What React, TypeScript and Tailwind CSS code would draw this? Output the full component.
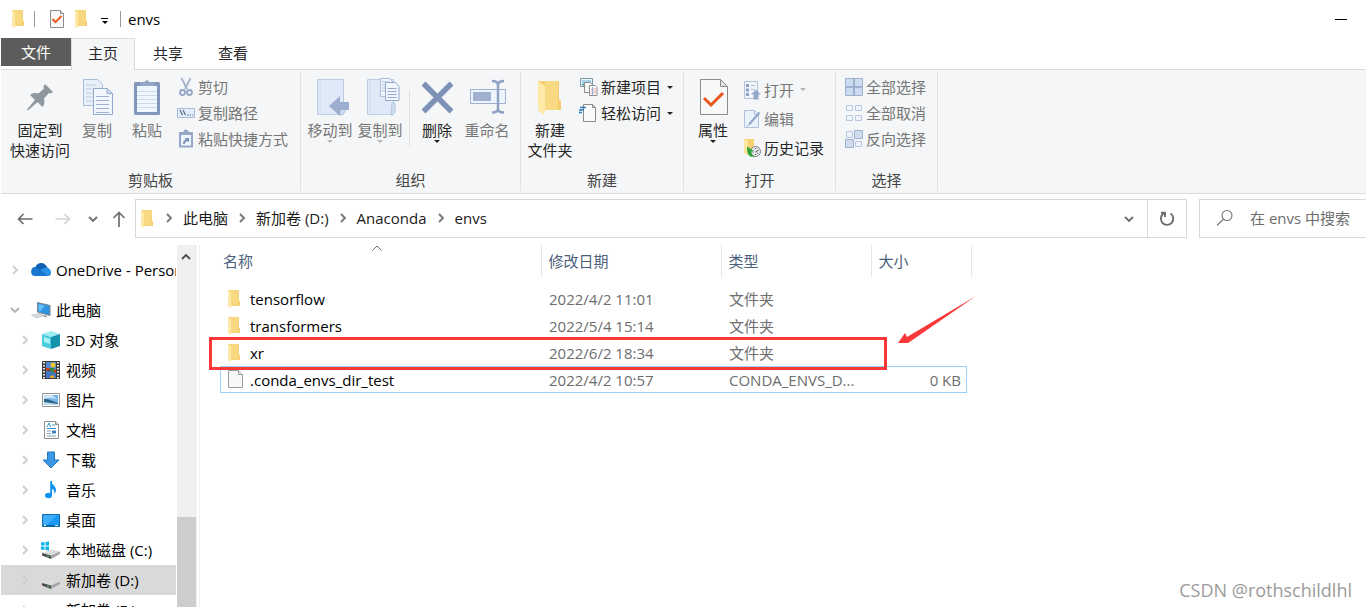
import type { ReactNode } from "react";
import clsx from "clsx";

type IconProps = { className?: string };

/* ---------- shared glyphs ---------- */

function FolderIcon({ className = "h-[18px] w-4" }: IconProps) {
  return (
    <svg viewBox="0 0 16 18" className={clsx("shrink-0", className)} aria-hidden="true">
      <path d="M2 0h11v10.500l1 1V16H4z" fill="#f3cd6c" />
      <path d="M5 0h7.500v15.500H5z" fill="#f8d981" />
      <path d="M2 0l3 2V17l-1 1-2-1.800z" fill="#ffe9a8" />
    </svg>
  );
}

function CheckPageIcon({ className = "h-[18px] w-4" }: IconProps) {
  return (
    <svg viewBox="0 0 16 18" className={clsx("shrink-0", className)} aria-hidden="true">
      <path d="M1.500.5h10l3 3v14h-13z" fill="#f8f8f9" stroke="#8c8c8c" />
      <path d="M11.500.5v3h3" fill="#dcdcdc" stroke="#8c8c8c" />
      <path d="M3.500 9l3 3.200L12.500 6" fill="none" stroke="#e8561b" strokeWidth="1.900" />
    </svg>
  );
}

function Caret({ className = "text-[#222]" }: IconProps) {
  return (
    <svg viewBox="0 0 6 3" className={clsx("h-[3px] w-1.5 shrink-0", className)} aria-hidden="true">
      <path d="M0 0h6L3 3z" fill="currentColor" />
    </svg>
  );
}

function Chevron({ dir, className }: IconProps & { dir: "right" | "down" | "up" }) {
  const d = { right: "M4 2l4 4-4 4", down: "M2 4l4 4 4-4", up: "M2 8l4-4 4 4" }[dir];
  return (
    <svg viewBox="0 0 12 12" className={clsx("size-3 shrink-0", className)} fill="none" stroke="currentColor" strokeWidth="1.900" aria-hidden="true">
      <path d={d} />
    </svg>
  );
}

/* ---------- ribbon icons, large (40x40) ---------- */

function Big({ children }: { children: ReactNode }) {
  return (
    <svg viewBox="0 0 40 40" className="size-10 shrink-0" fill="none" aria-hidden="true">
      {children}
    </svg>
  );
}

const PinIcon = () => (
  <Big>
    <path d="M25 6l8 8-2 1.500-2-.5-5 5.500c1 3 .5 6-1.500 8.500l-5-5-9.500 8.500 -1-1 8-9.500-5-5c2.500-2 5.500-2.500 8.500-1.500l5.500-5-.500-2z" fill="#8d989f" />
  </Big>
);

const CopyIcon = () => (
  <Big>
    <path d="M6.500 1.500h14l5 5v21h-19z" fill="#e8f0fa" stroke="#a9bddb" />
    <path d="M9 7h10M9 11h12M9 15h8M9 19h8M9 23h8" stroke="#bdcde6" />
    <path d="M16.500 10.500h13.500l5.500 5v21h-19z" fill="#f1f6fd" stroke="#94aacd" />
    <path d="M30 10.500v5h5.500z" fill="#d9e5f5" stroke="#94aacd" />
    <path d="M19 18.500h13M19 22.500h13M19 26.500h13M19 30.500h13M19 34.500h13" stroke="#9fb2d2" />
  </Big>
);

const PasteIcon = () => (
  <Big>
    <rect x="7" y="4" width="26" height="33" rx="1.500" fill="#8397bd" />
    <path d="M10 8h20v26H10z" fill="#f0f6fd" />
    <path d="M10 13.500h20M10 17.500h20M10 21.500h20M10 25.500h20M10 29.500h20" stroke="#cbdbed" />
    <path d="M13 8V4h4.500a2.700 2.700 0 0 1 5 0H27v4z" fill="#93a5c8" />
  </Big>
);

const MoveToIcon = () => (
  <Big>
    <path d="M7.500 1.500h26v35h-26z" fill="#dfe9f7" stroke="#bccce3" />
    <path d="M10 2v34" stroke="#cfdcef" />
    <path d="M31 25h4v9l-3 3h-2z" fill="#cfdeef" stroke="#b5c7df" />
    <path d="M39 24v8h-9v6l-11-10 11-10v6z" fill="#9dafcf" />
  </Big>
);

const CopyToIcon = () => (
  <Big>
    <path d="M7.500 1.500h26v35h-26z" fill="#dfe9f7" stroke="#bccce3" />
    <path d="M10 2v34" stroke="#cfdcef" />
    <path d="M32 25h3v9l-2 3h-2z" fill="#cfdeef" stroke="#b5c7df" />
    <path d="M20.500.500h9l4 4v14h-13z" fill="#f1f6fd" stroke="#a9bddb" />
    <path d="M22 4h7M22 7h4M22 10h4M22 13h4" stroke="#a9bddb" />
    <path d="M25.500 4.500h10l3.500 4v14H25.500z" fill="#f1f6fd" stroke="#94aacd" />
    <path d="M27.500 10.500h9M27.500 13.500h9M27.500 16.500h9M27.500 19.500h9" stroke="#94aacd" />
  </Big>
);

const DeleteIcon = () => (
  <Big>
    <path d="M6.500 5.500l28 28M34.500 5.500l-28 28" stroke="#7d90b6" strokeWidth="5.500" />
  </Big>
);

const RenameIcon = () => (
  <Big>
    <path d="M3.500 11.500h35v14h-35z" fill="#edf4fc" stroke="#9db1d1" />
    <path d="M6 14h18v9H6z" fill="#a0b1d0" />
    <path d="M25 3c4 0 6 1 6 4 0-3 2-4 6-4M31 6v26M25 34.500c4 0 6-1 6-4 0 3 2 4 6 4" stroke="#8fa2c4" strokeWidth="2.500" />
  </Big>
);

const NewFolderIcon = () => (
  <Big>
    <path d="M9 3h20v18l2 2v9H14z" fill="#f4ce6e" />
    <path d="M15 3h13v29H15z" fill="#f9da82" />
    <path d="M8 3l7 5v26l-2 3-5-5z" fill="#ffe9a8" />
  </Big>
);

const PropertiesIcon = () => (
  <Big>
    <path d="M7.500 1.500h20l7 7v28h-27z" fill="#f8f8f9" stroke="#8c8c8c" />
    <path d="M27.500 1.500v7h7z" fill="#e2e2e2" stroke="#8c8c8c" />
    <path d="M11 20l7 7L30 15" stroke="#e8561b" strokeWidth="3" />
  </Big>
);

/* ---------- ribbon icons, small (20x20) ---------- */

function Small({ children }: { children: ReactNode }) {
  return (
    <svg viewBox="0 0 20 20" className="size-5 shrink-0" fill="none" aria-hidden="true">
      {children}
    </svg>
  );
}

const CutIcon = () => (
  <Small>
    <path d="M5.500 1l5.500 11M14.500 1L9 12" stroke="#a3b2cc" strokeWidth="1.700" />
    <circle cx="6.500" cy="15.500" r="2.500" stroke="#92a5c6" strokeWidth="1.800" />
    <circle cx="13.500" cy="15.500" r="2.500" stroke="#92a5c6" strokeWidth="1.800" />
  </Small>
);

const CopyPathIcon = () => (
  <Small>
    <path d="M1.500 5.500h17v9h-17z" fill="#e3edf9" stroke="#aabbd6" />
    <path d="M4 7l2.500 5M7 7l2.500 5M11 12h1.500M13.500 12H15M16 12h1" stroke="#5d6e8e" strokeWidth="1.200" />
  </Small>
);

const PasteShortcutIcon = () => (
  <Small>
    <path d="M3 3h4.500a2.500 2.500 0 0 1 5 0H17v15.500H3z" fill="#95a8ca" />
    <path d="M5 6h10v10.500H5z" fill="#f0f6fd" />
    <path d="M7 15c0-3 1-4 3-4.500L8.500 9H13v4.500L11.500 12C10 12.500 9 13 9 15z" fill="#7c91ba" />
  </Small>
);

const NewItemIcon = () => (
  <Small>
    <path d="M1.500 1.500h12v8h-12z" fill="#eaf3f7" stroke="#7b98a5" />
    <path d="M3 6.500h9v2H3z" fill="#5b9ba8" />
    <path d="M3 3h9v3H3z" fill="#a8d2ee" />
    <path d="M5.500 5.500h6l2 2v8h-8z" fill="#f7f7f7" stroke="#8d8d8d" />
    <path d="M10.500 8.500h5.500l2 2v8h-7.500z" fill="#fff" stroke="#8d8d8d" />
    <path d="M12 12h5M12 14h5M12 16h5" stroke="#e9a5a5" />
    <path d="M13.500 10v8" stroke="#93b4df" />
  </Small>
);

const EasyAccessIcon = () => (
  <Small>
    <path d="M4.500 1.500h9l3 3v14h-12z" fill="#fafafa" stroke="#8a8a8a" />
    <path d="M13.500 1.500v3h3" stroke="#8a8a8a" />
    <path d="M1 4.500h6M0 7h5M0 9.500h3" stroke="#2d7ac0" strokeWidth="1.300" />
  </Small>
);

const OpenIcon = () => (
  <Small>
    <path d="M2.500 1.500h13v17h-13z" fill="#f0f5fc" stroke="#b5c3da" />
    <path d="M4 4h3v3H4zM4 8.500h3v3H4zM4 13h3v3H4z" fill="#8ea1c4" />
    <path d="M9 5.500h4M9 9.500h4" stroke="#b5c3da" />
    <path d="M14 9.500l5 5h-2.500v5h-5v-5H9z" fill="#96a8ca" />
  </Small>
);

const EditIcon = () => (
  <Small>
    <path d="M2.500 1.500h10l4 4v13h-14z" fill="#eaf2fb" stroke="#b0c1dc" />
    <path d="M12.500 1.500v4h4" stroke="#b0c1dc" />
    <path d="M7 15.500L17.500 3.500" stroke="#93a7ca" strokeWidth="2.200" />
    <path d="M4.500 17l2-.5" stroke="#93a7ca" />
  </Small>
);

const HistoryIcon = () => (
  <Small>
    <path d="M2 1h10v13H4z" fill="#f6d171" />
    <path d="M2 1l4 2v14l-4-2z" fill="#ffe7a0" />
    <circle cx="13.500" cy="13.500" r="5" fill="#e3e6e6" stroke="#7f8987" />
    <path d="M13.500 14l3-2M10.500 14h1M13.500 17v-1M13.500 10v1M16 15.500l-1-.5" stroke="#555" />
    <path d="M5 8.500c0 4 0 7 2.500 9.500 2 1 4 1 5.500.5-2.500-1-4-2.500-3.500-5L12 13z" fill="#2fa53c" />
  </Small>
);

const SelectAllIcon = () => (
  <Small>
    <path d="M1.500 1.500h17v17h-17z" fill="#cddbf0" stroke="#9fb1d0" />
    <path d="M10 1v18M1 10h18" stroke="#9fb1d0" strokeWidth="2" />
  </Small>
);

const SelectNoneIcon = () => (
  <Small>
    <path d="M2.500 2.500h6v5h-6zM11.500 2.500h6v5h-6zM2.500 12.500h6v5h-6zM11.500 12.500h6v5h-6z" fill="#edf4fc" stroke="#b9c8df" />
  </Small>
);

const InvertIcon = () => (
  <Small>
    <path d="M2.500 2.500h6v6h-6zM11.500 12.500h6v5h-6z" fill="#edf4fc" stroke="#b9c8df" />
    <path d="M10.500 1.500h8v8h-8zM1.500 10.500h8v8h-8z" fill="#cfdcf0" stroke="#9fb1d0" />
  </Small>
);

/* ---------- ribbon pieces ---------- */

type ButtonProps = {
  icon: ReactNode;
  label: string[];
  enabled?: boolean;
  caret?: boolean;
  className?: string;
};

function LargeButton({ icon, label, enabled, caret, className = "w-[50px]" }: ButtonProps) {
  return (
    <button
      type="button"
      className={clsx("flex shrink-0 flex-col items-center pt-1", enabled ? "text-[#262626]" : "text-[#767676]", className)}
    >
      {icon}
      <span className="mt-0.5 flex flex-col items-center whitespace-nowrap leading-5">
        {label.map((line) => (
          <span key={line}>{line}</span>
        ))}
      </span>
      {caret && <Caret className={enabled ? "text-[#222]" : "text-[#b5b5b5]"} />}
    </button>
  );
}

function SmallButton({ icon, label, enabled, caret, className = "h-[26px]" }: ButtonProps) {
  return (
    <button
      type="button"
      className={clsx("flex items-center gap-0.5 whitespace-nowrap", enabled ? "text-[#262626]" : "text-[#767676]", className)}
    >
      {icon}
      {label[0]}
      {caret && <Caret className={clsx("ml-1", enabled ? "text-[#222]" : "text-[#b5b5b5]")} />}
    </button>
  );
}

function Group({ title, className, children }: { title: string; className?: string; children: ReactNode }) {
  return (
    <section className="flex py-0.5">
      <div className="flex flex-col border-r border-[#e0e1e3] pt-0.5">
        <div className={clsx("flex h-24 items-start", className)}>{children}</div>
        <h2 className="text-center leading-5 text-[#444]">{title}</h2>
      </div>
    </section>
  );
}

function Ribbon() {
  return (
    <div className="flex h-[124px] border-b border-[#dadbdc] bg-[#f5f6f7]">
      <Group title="剪贴板" className="pl-2 pr-3">
        <LargeButton icon={<PinIcon />} label={["固定到", "快速访问"]} enabled className="w-[62px]" />
        <div className="ml-px flex">
          <LargeButton icon={<CopyIcon />} label={["复制"]} />
          <LargeButton icon={<PasteIcon />} label={["粘贴"]} />
        </div>
        <div className="ml-1 flex flex-col">
          <SmallButton icon={<CutIcon />} label={["剪切"]} />
          <SmallButton icon={<CopyPathIcon />} label={["复制路径"]} />
          <SmallButton icon={<PasteShortcutIcon />} label={["粘贴快捷方式"]} />
        </div>
      </Group>
      <Group title="组织" className="pl-1 pr-2">
        <LargeButton icon={<MoveToIcon />} label={["移动到"]} caret />
        <LargeButton icon={<CopyToIcon />} label={["复制到"]} caret />
        <div className="ml-1 mr-0.5 mt-4 h-14 w-px bg-[#e0e1e3]" />
        <LargeButton icon={<DeleteIcon />} label={["删除"]} enabled caret />
        <LargeButton icon={<RenameIcon />} label={["重命名"]} />
      </Group>
      <Group title="新建" className="pl-1 pr-2.5">
        <LargeButton icon={<NewFolderIcon />} label={["新建", "文件夹"]} enabled />
        <div className="ml-1 flex flex-col">
          <SmallButton icon={<NewItemIcon />} label={["新建项目"]} enabled caret />
          <SmallButton icon={<EasyAccessIcon />} label={["轻松访问"]} enabled caret />
        </div>
      </Group>
      <Group title="打开" className="pl-1 pr-[11px]">
        <LargeButton icon={<PropertiesIcon />} label={["属性"]} enabled caret />
        <div className="ml-1 flex flex-col pt-px">
          <SmallButton icon={<OpenIcon />} label={["打开"]} caret className="h-[29px]" />
          <SmallButton icon={<EditIcon />} label={["编辑"]} className="h-[29px]" />
          <SmallButton icon={<HistoryIcon />} label={["历史记录"]} enabled className="h-[29px]" />
        </div>
      </Group>
      <Group title="选择" className="pl-2 pr-[11px]">
        <div className="flex flex-col">
          <SmallButton icon={<SelectAllIcon />} label={["全部选择"]} />
          <SmallButton icon={<SelectNoneIcon />} label={["全部取消"]} />
          <SmallButton icon={<InvertIcon />} label={["反向选择"]} />
        </div>
      </Group>
    </div>
  );
}

/* ---------- title bar, tabs, address ---------- */

function TitleBar() {
  return (
    <header className="flex h-[38px] items-center pl-2 pr-[18px]">
      <FolderIcon className="ml-px h-[18px] w-4" />
      <span className="ml-2 h-4 w-px bg-[#9a9a9a]" />
      <button type="button" aria-label="属性" className="ml-3.5">
        <CheckPageIcon />
      </button>
      <button type="button" aria-label="新建文件夹" className="ml-2">
        <FolderIcon />
      </button>
      <button type="button" aria-label="自定义快速访问工具栏" className="ml-3 flex flex-col items-center gap-0.5 pt-1">
        <span className="h-px w-[7px] bg-black" />
        <Caret className="text-black" />
      </button>
      <span className="ml-3 h-4 w-px bg-[#9a9a9a]" />
      <h1 className="ml-[7px] flex-1 text-black">envs</h1>
      <button type="button" aria-label="最小化" className="mr-px flex h-3 w-3 items-center">
        <span className="h-px w-full bg-black" />
      </button>
    </header>
  );
}

function Tabs() {
  return (
    <nav className="flex h-8 text-[#262626]">
      <div className="w-[70px] border-b border-[#dadbdc]">
        <button type="button" className="h-7 w-full bg-[#5c5c5c] text-white">
          文件
        </button>
      </div>
      <button type="button" className="w-16 border-x border-t border-[#dadbdc] bg-[#f5f6f7] pb-[3px]">
        主页
      </button>
      <div className="flex flex-1 border-b border-[#dadbdc]">
        <button type="button" className="w-[66px] pb-px">
          共享
        </button>
        <button type="button" className="w-16 pb-px">
          查看
        </button>
      </div>
    </nav>
  );
}

const crumbs = ["此电脑", "新加卷 (D:)", "Anaconda", "envs"];

function AddressBar() {
  return (
    <div className="flex h-[51px] items-start pt-[5px]">
      <div className="flex h-10 w-[134px] shrink-0 items-center pl-4 text-[#6e6e6e]">
        <button type="button" aria-label="后退">
          <svg viewBox="0 0 16 16" className="size-4" fill="none" stroke="currentColor" strokeWidth="1.700" aria-hidden="true">
            <path d="M15.500 8H1.500M6.500 3l-5 5 5 5" />
          </svg>
        </button>
        <button type="button" aria-label="前进" className="ml-[22px] text-[#d4d4d4]">
          <svg viewBox="0 0 16 16" className="size-4" fill="none" stroke="currentColor" strokeWidth="1.700" aria-hidden="true">
            <path d="M.5 8h14M9.500 3l5 5-5 5" />
          </svg>
        </button>
        <button type="button" aria-label="最近位置" className="ml-4">
          <Chevron dir="down" />
        </button>
        <button type="button" aria-label="向上" className="ml-3">
          <svg viewBox="0 0 16 16" className="size-4" fill="none" stroke="currentColor" strokeWidth="1.700" aria-hidden="true">
            <path d="M8 16V1.500M2.500 7L8 1.500 13.500 7" />
          </svg>
        </button>
      </div>

      <div className="flex h-[39px] flex-1 items-center border border-[#d9d9d9]">
        <FolderIcon className="ml-[3px] h-[18px] w-4" />
        {crumbs.map((crumb) => (
          <span key={crumb} className="flex items-center pb-0.5">
            <Chevron dir="right" className="mx-2 text-[#777]" />
            <button type="button" className="whitespace-nowrap text-[#1a1a1a]">
              {crumb}
            </button>
          </span>
        ))}
        <button type="button" aria-label="展开" className="ml-auto mr-3 text-[#6e6e6e]">
          <Chevron dir="down" />
        </button>
        <button type="button" aria-label="刷新" className="flex h-full w-[39px] items-center justify-center border-l border-[#d9d9d9] text-[#6e6e6e]">
          <svg viewBox="0 0 16 16" className="size-4" fill="none" stroke="currentColor" strokeWidth="1.900" aria-hidden="true">
            <path d="M11.500 2.500A6.200 6.200 0 1 1 5 2.300M2 1.800h4V6" />
          </svg>
        </button>
      </div>

      <label className="ml-3 flex h-[39px] w-[167px] items-center border-y border-l border-[#d9d9d9] pb-0.5 pl-4">
        <svg viewBox="0 0 18 18" className="size-[18px] shrink-0 text-[#777]" fill="none" stroke="currentColor" strokeWidth="1.100" aria-hidden="true">
          <circle cx="11" cy="6.500" r="5" />
          <path d="M7.500 10L1 16.500" />
        </svg>
        <input
          type="search"
          aria-label="搜索"
          placeholder="在 envs 中搜索"
          className="ml-4 w-0 min-w-0 flex-1 bg-transparent outline-none placeholder:text-[#6d6d6d]"
        />
      </label>
    </div>
  );
}

/* ---------- navigation pane ---------- */

const icon = {
  cloud: (
    <>
      <path d="M4.500 15a4 4 0 0 1 0-8A6 6 0 0 1 15 5.500L17.500 9 9 15z" fill="#0f62b4" />
      <path d="M3 13.800L13 8a5 5 0 0 1 7 5c0 2-1 3-3 3H5c-1 0-2-1-2-2.200z" fill="#2a93e6" />
      <path d="M.3 13C0 9 3 7.200 6 8l10 6.500-1 1.500H4c-2 0-3.500-1-3.700-3z" fill="#1676d2" />
    </>
  ),
  pc: (
    <>
      <path d="M6.500 2.500l12.500 3v10L6.500 12z" fill="#2f94e0" stroke="#77838c" />
      <path d="M7.500 4L14 5.500l-5 6-1.500-.5z" fill="#64bdf3" />
      <path d="M13 15l3 1v1.500l-4-1z" fill="#8d979e" />
      <path d="M.5 15l8-1.500 4 2L5.500 18z" fill="#d8dde1" stroke="#aab2b8" strokeWidth=".6" />
    </>
  ),
  cube: (
    <>
      <path d="M1 4l9-3 9 3-9 3z" fill="#9cebf0" />
      <path d="M1 4l9 3v12l-9-3z" fill="#4ccbdc" />
      <path d="M19 4l-9 3v12l9-3z" fill="#1593ad" />
      <path d="M3 7l6 2v5l-6-2z" fill="#a8f0f2" />
    </>
  ),
  video: (
    <>
      <path d="M1 1h18v18H1z" fill="#3b3b3b" />
      <path d="M5 2h10v8H5z" fill="#5688cf" />
      <path d="M5 11h10v7H5z" fill="#3f76c8" />
      <circle cx="12" cy="5" r="2.500" fill="#ecc528" />
      <path d="M5 8h6l4 2v3l-4-1-3-2-3 1z" fill="#d2411e" />
      <path d="M8 8h5v4l-2 1z" fill="#2b8a43" />
      <path d="M9 16l3-1 2 3H9z" fill="#e5a526" />
      <path d="M3 2v17M17 2v17" stroke="#e7e7e7" strokeWidth="2" strokeDasharray="1.500 1.500" />
    </>
  ),
  image: (
    <>
      <path d="M1.500 3.500h17v13h-17z" fill="#fff" stroke="#949494" />
      <path d="M3 5h14v10H3z" fill="#75b4e6" />
      <path d="M3 8l14 5v2H3z" fill="#28658a" />
      <path d="M3 12c4 1 9 1 14 2v1H3z" fill="#b9dcee" />
      <path d="M3 5h8l5 4-7-1-6 1z" fill="#cde5f6" />
    </>
  ),
  doc: (
    <>
      <path d="M3.500 1.500h11l3 3v14h-14z" fill="#fff" stroke="#8d8d8d" />
      <path d="M14.500 1.500v3h3" fill="none" stroke="#8d8d8d" />
      <path d="M6 7l2-4 1.500 4M11 5h3M6 8.500h9" fill="none" stroke="#3692c7" />
      <path d="M6 11h4M6 13.500h4M6 16h9" stroke="#7ea0b4" />
      <path d="M11 10.500h4v3h-4z" fill="#3f83bd" />
    </>
  ),
  download: <path d="M6.500 2h7v8H18l-8 8-8-8h4.500z" fill="#3b97e4" stroke="#2577bd" />,
  music: (
    <>
      <path d="M10 1c1 4 5 5 5 9 0 2-1 3-1.500 4 .3-3-1-5-3.500-5.500z" fill="#1093f0" />
      <path d="M9.200 1H11v14H9.200z" fill="#1093f0" />
      <ellipse cx="7.500" cy="15.500" rx="3.500" ry="2.700" fill="#1093f0" />
    </>
  ),
  desktop: (
    <>
      <path d="M1.500 4.500h17v12h-17z" fill="#1b98f4" stroke="#0f6ea8" />
      <path d="M2 5h14L6 15H2z" fill="#3fadfa" />
      <path d="M2 15.500h16" stroke="#0b5e92" />
      <path d="M3 15.500h2M14 15.500h3" stroke="#d9f0ff" />
    </>
  ),
  disk: (
    <>
      <path d="M1 13l9-3.500 9 2-9 4z" fill="#dcdcdc" />
      <path d="M1 13l9 2.500V19l-9-3.500z" fill="#4c4c4c" />
      <path d="M10 15.500l9-4V14l-9 5z" fill="#a5a5a5" />
      <path d="M6 16l2 .6" stroke="#4ad04e" strokeWidth="1.200" />
    </>
  ),
};

const windowsDisk = (
  <>
    {icon.disk}
    <path d="M0 2.500L3.500 2v3.500H0zM4.500 1.900L8 1.500v4H4.500zM0 6.500h3.500V10L0 9.500zM4.500 6.500H8v4l-3.500-.5z" fill="#0cb3e8" />
  </>
);

const places = [
  { label: "3D 对象", art: icon.cube },
  { label: "视频", art: icon.video },
  { label: "图片", art: icon.image },
  { label: "文档", art: icon.doc },
  { label: "下载", art: icon.download },
  { label: "音乐", art: icon.music },
  { label: "桌面", art: icon.desktop },
  { label: "本地磁盘 (C:)", art: windowsDisk },
  { label: "新加卷 (D:)", art: icon.disk, selected: true },
  { label: "新加卷 (E:)", art: icon.disk },
];

type NavRowProps = { label: string; art: ReactNode; child?: boolean; open?: boolean; selected?: boolean };

function NavRow({ label, art, child, open, selected }: NavRowProps) {
  return (
    <button
      type="button"
      className={clsx(
        "flex h-[30px] w-full shrink-0 items-center overflow-hidden whitespace-nowrap text-black",
        child ? "pl-[18px]" : "pl-2",
        selected && "bg-[#d9d9d9]",
      )}
    >
      <Chevron dir={open ? "down" : "right"} className={open ? "text-[#b4b4b4]" : "text-[#cfcfcf]"} />
      <svg viewBox="0 0 20 20" className="ml-2.5 mr-[5px] size-5 shrink-0" aria-hidden="true">
        {art}
      </svg>
      {label}
    </button>
  );
}

function Sidebar() {
  return (
    <aside className="flex w-[199px] shrink-0 border-r border-[#f0f0f0]">
      <div className="flex w-[175px] flex-col overflow-hidden pt-2.5">
        <NavRow label="OneDrive - Personal" art={icon.cloud} />
        <div className="h-2.5 shrink-0" />
        <NavRow label="此电脑" art={icon.pc} open />
        {places.map((place) => (
          <NavRow key={place.label} {...place} child />
        ))}
      </div>
      <div className="ml-px flex w-5 flex-col bg-[#f0f0f0]">
        <Chevron dir="up" className="ml-[3px] mt-1.5 text-[#505050]" />
        <div className="mr-px mt-auto h-1/4 bg-[#cdcdcd]" />
      </div>
    </aside>
  );
}

/* ---------- file list ---------- */

const files = [
  { name: "tensorflow", date: "2022/4/2 11:01", type: "文件夹", size: "", folder: true },
  { name: "transformers", date: "2022/5/4 15:14", type: "文件夹", size: "", folder: true },
  { name: "xr", date: "2022/6/2 18:34", type: "文件夹", size: "", folder: true, marked: true },
  { name: ".conda_envs_dir_test", date: "2022/4/2 10:57", type: "CONDA_ENVS_D...", size: "0 KB", focused: true },
];

function FileIcon() {
  return (
    <svg viewBox="0 0 16 20" className="h-5 w-4 shrink-0" aria-hidden="true">
      <path d="M.5.500h10l4 4v13H.5z" fill="#f8f8f8" stroke="#9b9b9b" />
      <path d="M10.500.500v4h4" fill="#e6e6e6" stroke="#9b9b9b" />
    </svg>
  );
}

function FileList() {
  return (
    <main className="min-w-0 flex-1 pl-5">
      <table className="w-[751px] table-fixed text-left">
        <colgroup>
          <col className="w-[321px]" />
          <col className="w-[180px]" />
          <col className="w-[150px]" />
          <col className="w-[100px]" />
        </colgroup>
        <thead className="text-[#4c607a]">
          <tr className="h-8">
            <th className="relative border-r border-[#e5e5e5] pl-[3px] font-normal">
              名称
              <svg viewBox="0 0 10 6" className="absolute left-1/2 top-0 h-1.5 w-2.5 -translate-x-2" fill="none" stroke="#6b6b6b" aria-hidden="true">
                <path d="M.5 5.500L5 1l4.500 4.500" />
              </svg>
            </th>
            <th className="border-r border-[#e5e5e5] pl-[7px] font-normal">修改日期</th>
            <th className="border-r border-[#e5e5e5] pl-[7px] font-normal">类型</th>
            <th className="border-r border-[#e5e5e5] pl-[7px] font-normal">大小</th>
          </tr>
        </thead>
        <tbody className="text-[#6d6d6d] before:block before:h-2">
          {files.map((file) => (
            <tr key={file.name} className="relative h-[27px]">
              <td className="pl-2">
                <span className="flex items-center gap-1.5 text-black">
                  {file.folder ? <FolderIcon className="-ml-0.5 mr-0.5 h-[18px] w-4" /> : <FileIcon />}
                  {file.name}
                </span>
                {file.focused && <span className="absolute inset-y-0 left-0 right-1 border border-[#99d1ff]" />}
                {file.marked && (
                  <span className="absolute -bottom-1 -left-[11px] -top-0.5 right-[84px] z-10 border-[3px] border-[#fb3838]">
                    <svg viewBox="0 0 80 50" className="absolute -right-[93px] -top-[45px] h-[50px] w-20" aria-hidden="true">
                      <path d="M79 1L14 46l-3 2-10 0 7-10 2 4z" fill="#fb3838" />
                    </svg>
                  </span>
                )}
              </td>
              <td className="pl-2">{file.date}</td>
              <td className="whitespace-nowrap pl-2">{file.type}</td>
              <td className="pr-2.5 text-right">{file.size}</td>
            </tr>
          ))}
        </tbody>
      </table>
    </main>
  );
}

export default function App() {
  return (
    <div className="relative flex h-screen flex-col overflow-hidden bg-white pl-px font-['Open_Sans','Noto_Sans_CJK_SC',sans-serif] text-[15px] leading-5">
      <TitleBar />
      <Tabs />
      <Ribbon />
      <AddressBar />
      <div className="flex min-h-0 flex-1">
        <Sidebar />
        <FileList />
      </div>
      <p className="absolute bottom-[5px] right-3.5 text-lg leading-6 text-[#9b9b9b]">CSDN @rothschildlhl</p>
    </div>
  );
}
